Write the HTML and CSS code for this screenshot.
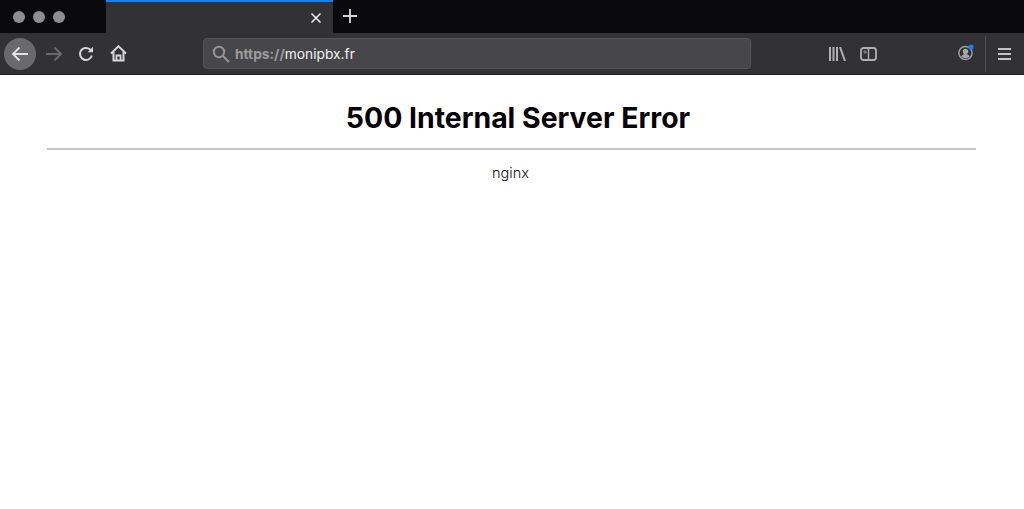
FILE: index.html
```html
<!DOCTYPE html>
<html lang="en">
<head>
<meta charset="utf-8">
<title>500 Internal Server Error</title>
<link rel="stylesheet" href="styles.css">
</head>
<body>
<header class="chrome">
  <div class="tabbar">
    <div class="traffic"><span class="dot"></span><span class="dot"></span><span class="dot"></span></div>
    <div class="tab">
      <svg class="tab-close" width="12" height="12" viewBox="0 0 12 12"><path d="M1.500 1.500l9 9M10.500 1.500l-9 9" stroke="#f4f4f5" stroke-width="1.500" fill="none"/></svg>
    </div>
    <svg class="new-tab" width="16" height="16" viewBox="0 0 16 16"><path d="M8 1v14M1 8h14" stroke="#d2d2d4" stroke-width="1.900" fill="none"/></svg>
  </div>
  <div class="toolbar">
    <div class="nav">
      <div class="back">
        <svg width="18" height="16" viewBox="0 0 18 16"><path d="M17 8H2M8.500 1.500L2 8l6.500 6.500" stroke="#e4e4e5" stroke-width="1.900" fill="none"/></svg>
      </div>
      <svg class="forward" width="18" height="16" viewBox="0 0 18 16"><path d="M1 8h15M9.500 1.500L16 8l-6.500 6.500" stroke="#6a6a6c" stroke-width="1.900" fill="none"/></svg>
      <svg class="reload" width="16" height="16" viewBox="0 0 16 16"><path d="M13.800 9.500A6 6 0 1 1 11.800 3.300L14 5" stroke="#d6d6d8" stroke-width="2" fill="none"/><path d="M15 0.800V6.200H9.600z" fill="#d6d6d8"/></svg>
      <svg class="home" width="17" height="17" viewBox="0 0 17 17"><path d="M1 8.500L8.500 1.300 16 8.500M3.500 7v8.500h10V7" stroke="#d6d6d8" stroke-width="2" fill="none"/><path d="M6.500 15.500v-5h4v5" stroke="#d6d6d8" stroke-width="1.800" fill="none"/></svg>
    </div>
    <div class="urlbar">
      <svg class="search" width="18" height="18" viewBox="0 0 18 18"><circle cx="7" cy="7" r="5.200" stroke="#959597" stroke-width="2" fill="none"/><path d="M11 11l6 6" stroke="#959597" stroke-width="2.200" fill="none"/></svg>
      <span class="url"><span class="scheme">https://</span>monipbx.fr</span>
    </div>
    <div class="tools">
      <svg class="library" width="17" height="14" viewBox="0 0 17 14"><path d="M1 0v14M4.500 0v14M8 0v14M11 0l5 14" stroke="#b0b0b2" stroke-width="2" fill="none"/></svg>
      <svg class="sidebar" width="17" height="14" viewBox="0 0 17 14"><rect x="1" y="1" width="15" height="12" rx="2.500" stroke="#b0b0b2" stroke-width="1.800" fill="none"/><path d="M8.500 1v12" stroke="#b0b0b2" stroke-width="1.400"/><path d="M3.500 3.500h3v3h-3z" fill="#7c7c7e"/></svg>
      <svg class="account" width="17" height="18" viewBox="0 0 17 18"><circle cx="7.500" cy="10" r="6.600" stroke="#9c9c9e" stroke-width="1.500" fill="none"/><circle cx="7.500" cy="8.500" r="2.700" fill="#a8a8aa"/><path d="M3.300 14c.6-2.300 2.300-3 4.200-3s3.600.7 4.200 3c-2.500 1.500-5.900 1.500-8.400 0z" fill="#a8a8aa"/><circle cx="13" cy="4" r="2.600" fill="#0a84ff"/></svg>
      <span class="divider"></span>
      <svg class="menu" width="13" height="12" viewBox="0 0 13 12"><path d="M0 1h13M0 6h13M0 11h13" stroke="#c4c4c6" stroke-width="1.800" fill="none"/></svg>
    </div>
  </div>
</header>
<main class="page">
  <h1 class="title">500 Internal Server Error</h1>
  <hr class="rule">
  <p class="server">nginx</p>
</main>
</body>
</html>
```
FILE: styles.css
```css
* { box-sizing: border-box; }
html, body { margin: 0; padding: 0; background: #fff; }
body { font-family: Inter, "Liberation Sans", sans-serif; height: 509px; overflow: hidden; }
svg { display: block; flex: none; }

.chrome { background: #323234; }
.tabbar { height: 33px; background: #0a0a0c; display: flex; align-items: stretch; }
.traffic { width: 106px; display: flex; align-items: center; gap: 8px; padding-left: 13px; }
.dot { width: 12px; height: 12px; border-radius: 50%; background: #8e8e90; }
.tab { width: 227px; background: #323234; border-top: 2px solid #0a84ff; display: flex; align-items: center; justify-content: flex-end; padding-right: 11px; }
.new-tab { margin: 8px 0 0 9px; }

.toolbar { height: 42px; display: flex; align-items: center; border-bottom: 1px solid #1e1e20; }
.nav { display: flex; align-items: center; padding-left: 4px; width: 203px; }
.back { width: 32px; height: 32px; border-radius: 50%; background: #6a6a6c; display: flex; align-items: center; justify-content: center; }
.forward { margin-left: 9px; }
.reload { margin-left: 15px; }
.home { margin-left: 16px; }

.urlbar { width: 548px; height: 31px; background: #474749; border: 1px solid #56565a; border-radius: 4px; display: flex; align-items: center; padding-left: 8px; }
.search { margin-right: 5px; }
.url { font-size: 13.750px; color: #f2f2f3; }
.scheme { color: #9c9c9e; font-weight: 700; }

.tools { display: flex; align-items: center; flex: 1; padding-left: 78px; }
.sidebar { margin-left: 14px; }
.account { margin-left: 81px; margin-top: -3px; }
.divider { width: 1px; height: 36px; background: #505052; margin-left: 10px; }
.menu { margin-left: 12px; }

.page { padding: 0 48px 0 47px; text-align: center; }
.title { margin: 0; padding: 25px 0 0 13px; font-size: 28.400px; line-height: 35px; font-weight: 700; color: #000; }
.rule { margin: 13px 0 0; border: 0; height: 2px; background: #c6c6c6; }
.server { margin: 13px 0 0; padding-right: 2px; font-size: 14.500px; line-height: 20px; font-weight: 300; color: #111; }
```
